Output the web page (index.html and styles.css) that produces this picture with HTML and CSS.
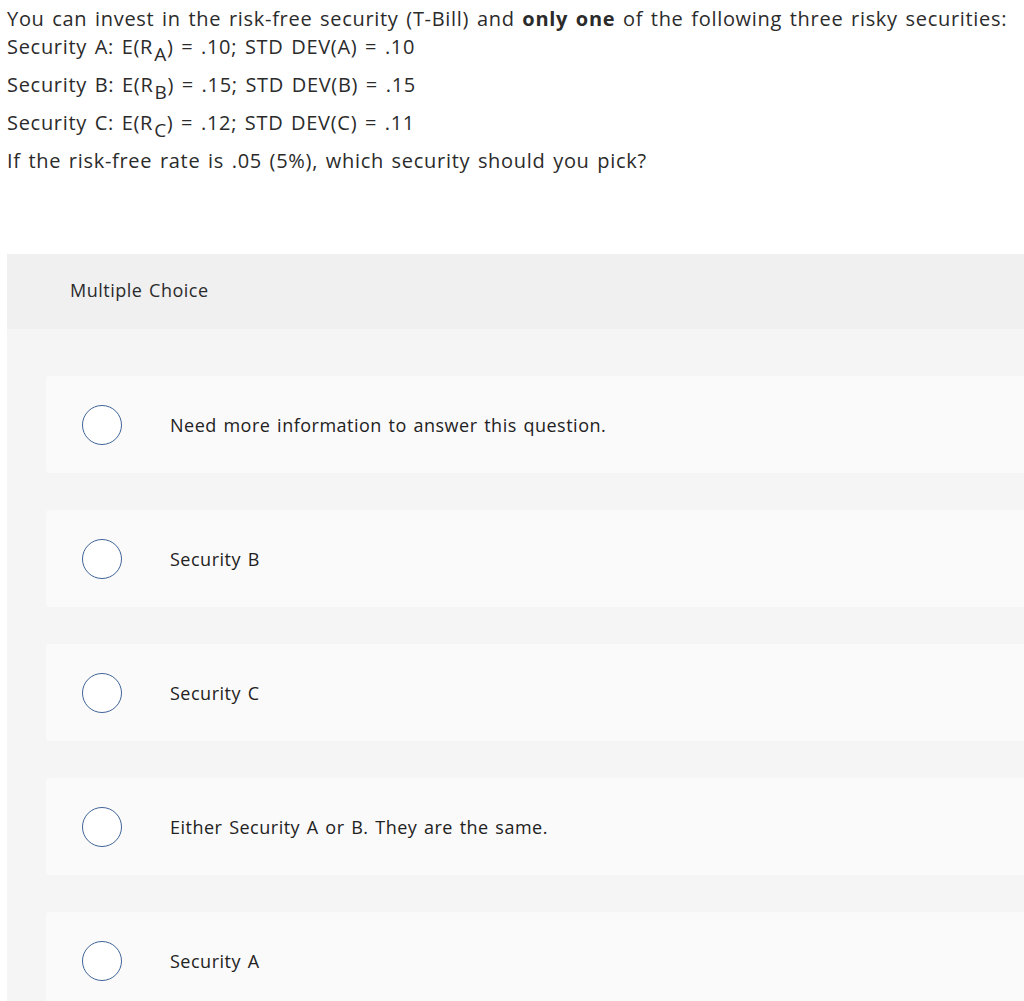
FILE: index.html
```html
<!DOCTYPE html>
<html>
<head>
<meta charset="utf-8">
<link rel="stylesheet" href="styles.css">
</head>
<body>
<div class="question">
  <p class="lead">You can invest in the risk-free security (T-Bill) and <b>only one</b> of the following three risky securities:</p>
  <p class="line">Security A: E(R<sub>A</sub>) = .10; STD DEV(A) = .10</p>
  <p class="line">Security B: E(R<sub>B</sub>) = .15; STD DEV(B) = .15</p>
  <p class="line">Security C: E(R<sub>C</sub>) = .12; STD DEV(C) = .11</p>
  <p class="line">If the risk-free rate is .05 (5%), which security should you pick?</p>
</div>
<div class="mc">
  <div class="mc-header">Multiple Choice</div>
  <div class="mc-body">
    <div class="option"><span class="radio"></span><span class="label">Need more information to answer this question.</span></div>
    <div class="option"><span class="radio"></span><span class="label">Security B</span></div>
    <div class="option"><span class="radio"></span><span class="label">Security C</span></div>
    <div class="option"><span class="radio"></span><span class="label">Either Security A or B. They are the same.</span></div>
    <div class="option"><span class="radio"></span><span class="label">Security A</span></div>
  </div>
</div>
</body>
</html>
```
FILE: styles.css
```css
html, body {
  margin: 0;
  padding: 0;
  background: #fff;
  font-family: "Open Sans", "Lato", sans-serif;
  color: #2b2b2b;
  overflow: hidden;
}
.question {
  padding: 5px 0 0 7px;
  font-size: 20px;
  letter-spacing: 0.7px;
  word-spacing: 1.8px;
}
.question p {
  margin: 0;
  white-space: nowrap;
  line-height: 28px;
}
.question .line + .line {
  margin-top: 10px;
}
.question b {
  font-weight: 700;
}
.question sub {
  font-size: 19px;
  vertical-align: -7px;
  line-height: 0;
  margin-left: 1px;
}
.mc {
  margin: 79px 0 0 7px;
}
.mc-header {
  background: #f0f0f0;
  height: 75px;
  display: flex;
  align-items: center;
  padding: 0 0 3px 63px;
  box-sizing: border-box;
  font-size: 18px;
  letter-spacing: 0.5px;
  word-spacing: 1.5px;
  color: #2b2b2b;
}
.mc-body {
  background: #f5f5f5;
  padding: 47px 0 0 39px;
  display: flex;
  flex-direction: column;
  gap: 37px;
  height: 700px;
}
.option {
  background: #fafafa;
  border-radius: 4px 0 0 4px;
  height: 97px;
  flex: none;
  display: flex;
  align-items: center;
  padding-left: 36px;
}
.radio {
  width: 38px;
  height: 38px;
  border: 1px solid #3f6496;
  border-radius: 50%;
  background: #fff;
  flex: none;
}
.label {
  margin-left: 48px;
  font-size: 18px;
  letter-spacing: 0.5px;
  word-spacing: 1.5px;
  color: #222;
}
```
